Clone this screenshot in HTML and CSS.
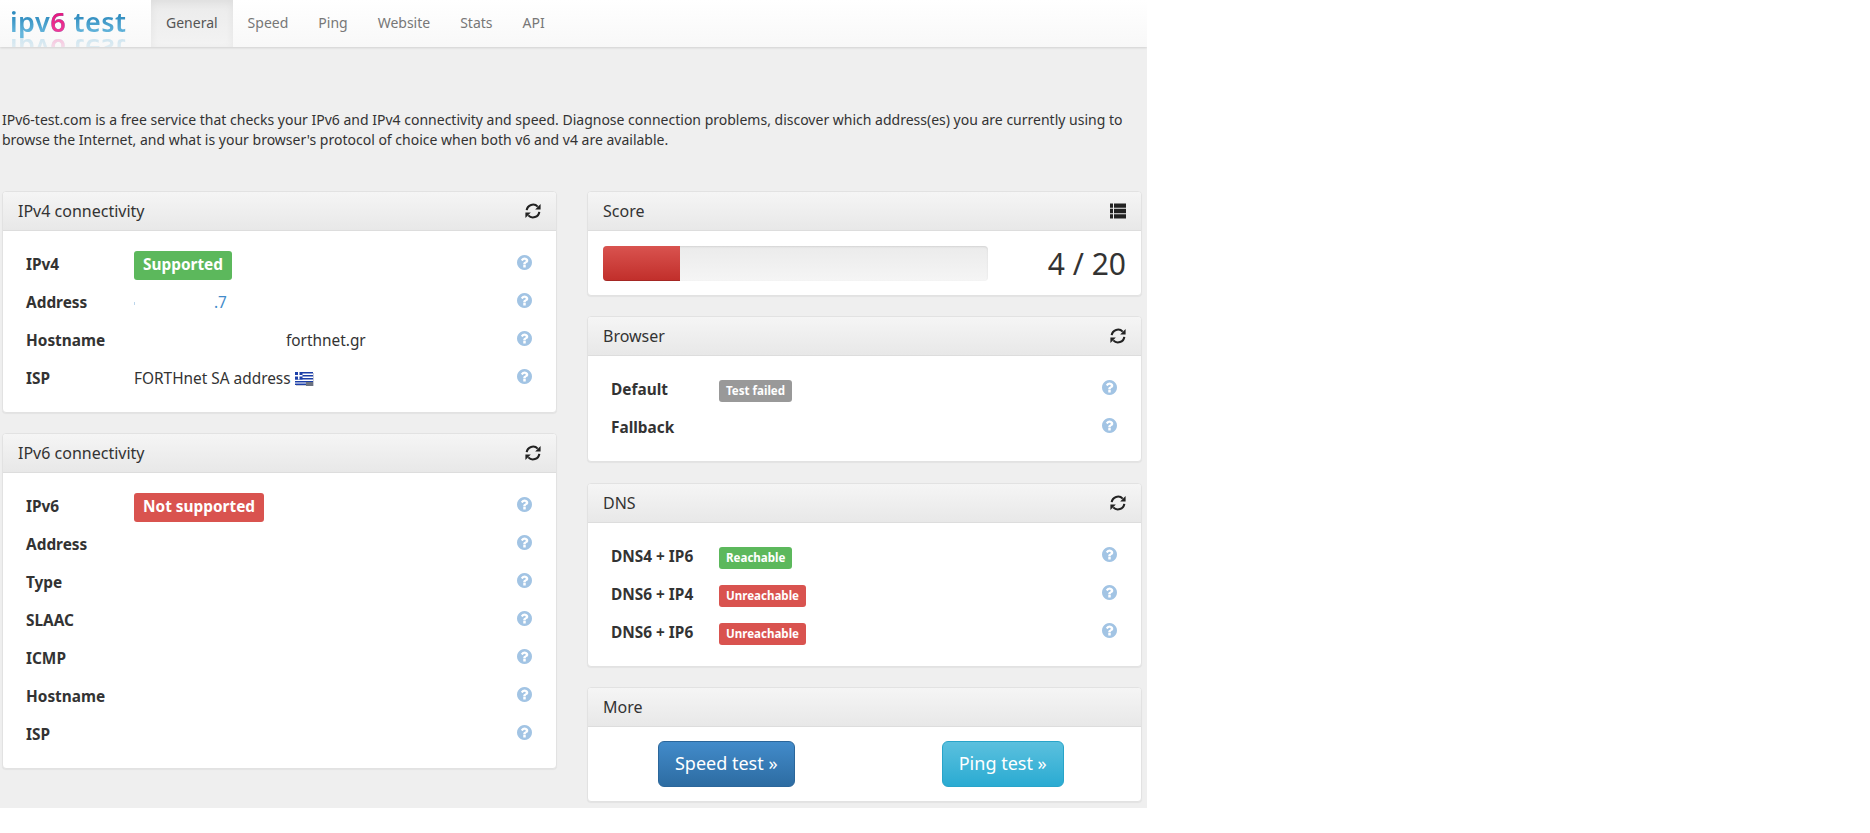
FILE: index.html
```html
<!DOCTYPE html>
<html lang="en">
<head>
<meta charset="utf-8">
<title>IPv6 test</title>
<link rel="stylesheet" href="styles.css">
</head>
<body>
<svg class="defs" width="0" height="0" aria-hidden="true">
  <symbol id="refresh" viewBox="0 0 16 16"><path class="arc" d="M1.7 7.2A6.4 6.4 0 0 1 12.7 3.6M14.3 8.8A6.4 6.4 0 0 1 3.3 12.4"/><path d="M15.6 1v5.4h-5.4zM.4 15V9.6h5.4z"/></symbol>
  <symbol id="help" viewBox="128 128 1536 1536"><path d="M1024 1376v-192q0-14-9-23t-23-9h-192q-14 0-23 9t-9 23v192q0 14 9 23t23 9h192q14 0 23-9t9-23zm256-672q0-88-55.5-163t-138.5-116-170-41q-243 0-371 213-15 24 8 42l132 100q7 6 19 6 16 0 25-12 53-68 86-92 34-24 86-24 48 0 85.5 26t37.5 59q0 38-20 61t-68 45q-63 28-115.5 86.5t-52.5 125.5v36q0 14 9 23t23 9h192q14 0 23-9t9-23q0-19 21.5-49.5t54.5-49.5q32-18 49-28.5t46-35 44.5-48 28-60.5 12.5-81zm384 192q0 209-103 385.5t-279.5 279.5-385.5 103-385.5-103-279.5-279.5-103-385.5 103-385.5 279.5-279.5 385.5-103 385.5 103 279.5 279.5 103 385.5z"/></symbol>
</svg>
<div class="page">
  <nav class="navbar">
    <a class="brand"><span class="logo">ipv<b>6</b> test</span></a>
    <ul class="nav">
      <li class="active">General</li>
      <li>Speed</li>
      <li>Ping</li>
      <li>Website</li>
      <li>Stats</li>
      <li>API</li>
    </ul>
  </nav>
  <p class="intro">IPv6-test.com is a free service that checks your IPv6 and IPv4 connectivity and speed. Diagnose connection problems, discover which address(es) you are currently using to browse the Internet, and what is your browser's protocol of choice when both v6 and v4 are available.</p>
  <main class="columns">
    <div class="col">
      <section class="panel">
        <header class="head"><span>IPv4 connectivity</span><svg class="ico"><use href="#refresh"/></svg></header>
        <div class="body">
          <div class="row"><strong>IPv4</strong><div class="val"><span class="label big green">Supported</span></div><svg class="q"><use href="#help"/></svg></div>
          <div class="row"><strong>Address</strong><div class="val"><span class="sliver"></span><a class="link masked-ip">.7</a></div><svg class="q"><use href="#help"/></svg></div>
          <div class="row"><strong>Hostname</strong><div class="val"><span class="masked-host">forthnet.gr</span></div><svg class="q"><use href="#help"/></svg></div>
          <div class="row"><strong>ISP</strong><div class="val isp">FORTHnet SA address
            <svg class="flag" viewBox="0 0 19 14"><rect x="1" y="1" width="18" height="13" fill="#c9ccd6"/><rect width="18" height="13" fill="#fff"/><path d="M0 0h18v1.5H0zM0 3h18v1.5H0zM0 6h18v1.5H0zM0 9h18v1.5H0zM0 11.5h18V13H0z" fill="#1c3fa8"/><rect width="7.5" height="7.5" fill="#1c3fa8"/><path d="M3 0h1.5v7.5H3zM0 3h7.5v1.5H0z" fill="#fff"/><rect x="11" y="10" width="7" height="4" fill="#6b7280"/></svg></div><svg class="q"><use href="#help"/></svg></div>
        </div>
      </section>
      <section class="panel">
        <header class="head"><span>IPv6 connectivity</span><svg class="ico"><use href="#refresh"/></svg></header>
        <div class="body">
          <div class="row"><strong>IPv6</strong><div class="val"><span class="label big red">Not supported</span></div><svg class="q"><use href="#help"/></svg></div>
          <div class="row"><strong>Address</strong><div class="val"></div><svg class="q"><use href="#help"/></svg></div>
          <div class="row"><strong>Type</strong><div class="val"></div><svg class="q"><use href="#help"/></svg></div>
          <div class="row"><strong>SLAAC</strong><div class="val"></div><svg class="q"><use href="#help"/></svg></div>
          <div class="row"><strong>ICMP</strong><div class="val"></div><svg class="q"><use href="#help"/></svg></div>
          <div class="row"><strong>Hostname</strong><div class="val"></div><svg class="q"><use href="#help"/></svg></div>
          <div class="row"><strong>ISP</strong><div class="val"></div><svg class="q"><use href="#help"/></svg></div>
        </div>
      </section>
    </div>
    <div class="col">
      <section class="panel">
        <header class="head"><span>Score</span><svg class="ico" viewBox="0 0 16 15"><path d="M0 0h3v4.3H0zM4 0h12v4.3H4zM0 5.35h3v4.3H0zM4 5.35h12v4.3H4zM0 10.7h3V15H0zM4 10.7h12V15H4z"/></svg></header>
        <div class="score">
          <div class="progress"><div class="bar"></div></div>
          <div class="points">4 / 20</div>
        </div>
      </section>
      <section class="panel panel-browser">
        <header class="head"><span>Browser</span><svg class="ico"><use href="#refresh"/></svg></header>
        <div class="body">
          <div class="row"><strong>Default</strong><div class="val"><span class="label small grey">Test failed</span></div><svg class="q"><use href="#help"/></svg></div>
          <div class="row"><strong>Fallback</strong><div class="val"></div><svg class="q"><use href="#help"/></svg></div>
        </div>
      </section>
      <section class="panel">
        <header class="head"><span>DNS</span><svg class="ico"><use href="#refresh"/></svg></header>
        <div class="body">
          <div class="row"><strong>DNS4 + IP6</strong><div class="val"><span class="label small green">Reachable</span></div><svg class="q"><use href="#help"/></svg></div>
          <div class="row"><strong>DNS6 + IP4</strong><div class="val"><span class="label small red">Unreachable</span></div><svg class="q"><use href="#help"/></svg></div>
          <div class="row"><strong>DNS6 + IP6</strong><div class="val"><span class="label small red">Unreachable</span></div><svg class="q"><use href="#help"/></svg></div>
        </div>
      </section>
      <section class="panel">
        <header class="head"><span>More</span></header>
        <div class="more">
          <div class="cell"><a class="btn blue">Speed test »</a></div>
          <div class="cell"><a class="btn cyan">Ping test »</a></div>
        </div>
      </section>
    </div>
  </main>
</div>
</body>
</html>
```

FILE: styles.css
```css
* { box-sizing: border-box; }
html, body { margin: 0; padding: 0; background: #fff; }
body {
  font-family: "Noto Sans", "Open Sans", sans-serif;
  font-size: 14px;
  line-height: 20px;
  color: #333;
}
.defs { display: block; height: 0; }
.page {
  width: 1147px;
  height: 808px;
  background: #efefef;
  overflow: hidden;
}
.navbar {
  display: flex;
  height: 47px;
  background: linear-gradient(#fff, #f8f8f8);
  box-shadow: 0 1px 2px rgba(0, 0, 0, .12);
}
.brand {
  display: block;
  width: 151px;
  height: 47px;
  padding: 6px 0 0 10px;
  overflow: hidden;
}
.logo {
  display: inline-block;
  font-size: 27px;
  line-height: 32px;
  font-weight: 600;
  letter-spacing: .45px;
  color: transparent;
  background: linear-gradient(#2f8cbf 30%, #66b6dc 85%);
  -webkit-background-clip: text;
  background-clip: text;
  -webkit-box-reflect: below -5px linear-gradient(transparent 25%, rgba(255, 255, 255, .3) 90%);
}
.logo b {
  font-weight: 600;
  background: linear-gradient(#e8197f 30%, #f0409c 85%);
  -webkit-background-clip: text;
  background-clip: text;
}
.nav {
  display: flex;
  margin: 0;
  padding: 0;
  list-style: none;
}
.nav li {
  padding: 13px 15px 0;
  color: #777;
}
.nav li.active {
  color: #555;
  background: linear-gradient(#ebebeb, #f3f3f3);
  box-shadow: inset 0 3px 9px rgba(0, 0, 0, .06);
}
.intro {
  margin: 63px 0 0;
  padding-left: 2px;
  width: 1130px;
}
.columns {
  display: flex;
  gap: 30px;
  margin-top: 41px;
  padding-left: 2px;
}
.col { width: 555px; }
.panel {
  margin-bottom: 20px;
  background: #fff;
  border: 1px solid #e2e2e2;
  border-radius: 4px;
  box-shadow: 0 1px 1px rgba(0, 0, 0, .05);
}
.panel-browser { margin-bottom: 21px; }
.head {
  display: flex;
  align-items: center;
  justify-content: space-between;
  height: 39px;
  padding: 0 15px;
  font-size: 16px;
  color: #333;
  background: linear-gradient(#f5f5f5, #e8e8e8);
  border-bottom: 1px solid #ddd;
  border-radius: 3px 3px 0 0;
}
.ico { width: 16px; height: 16px; fill: #222; flex: none; }
.arc { fill: none; stroke: #222; stroke-width: 2.1; }
.body { padding: 15px 24px 14px 23px; }
.row {
  display: flex;
  align-items: center;
  height: 38px;
  font-size: 15.4px;
}
.row strong { width: 108px; flex: none; font-weight: 700; }
.val { flex: 1; display: flex; align-items: center; gap: 4px; }
.q { width: 15px; height: 15px; fill: #a2c4e4; flex: none; margin-top: -5px; }
.label {
  display: inline-block;
  color: #fff;
  font-weight: 700;
  border-radius: 3px;
}
.big { height: 29px; padding: 0 9px; font-size: 15.4px; line-height: 27px; }
.small { height: 22px; padding: 0 7px; font-size: 11.55px; line-height: 21px; margin-top: 2px; }
.green { background: #5cb85c; }
.red { background: #d9534f; }
.grey { background: #999; }
.link { color: #428bca; }
.sliver { width: 1px; height: 3px; background: #bcd6ec; }
.masked-ip { margin-left: 75px; }
.masked-host { margin-left: 152px; }
.flag { width: 19px; height: 14px; flex: none; }
.score {
  display: flex;
  align-items: center;
  justify-content: space-between;
  height: 64px;
  padding: 0 15px;
}
.progress {
  width: 385px;
  height: 35px;
  background: linear-gradient(#ebebeb, #f5f5f5);
  border-radius: 4px;
  overflow: hidden;
  box-shadow: inset 0 1px 2px rgba(0, 0, 0, .1);
}
.bar {
  width: 20%;
  height: 100%;
  background: linear-gradient(#d9534f, #c12e2a);
  box-shadow: inset 0 -1px 0 rgba(0, 0, 0, .15);
}
.points { font-size: 30px; line-height: 35px; color: #333; }
.more { display: grid; grid-template-columns: 1fr 1fr; height: 74px; align-items: center; }
.cell { display: flex; justify-content: center; }
.btn {
  display: block;
  height: 46px;
  padding: 0 16px;
  font-size: 18px;
  line-height: 43px;
  color: #fff;
  border-radius: 6px;
}
.blue { background: linear-gradient(#428bca, #2d6ca2); border: 1px solid #2b669a; }
.cyan { background: linear-gradient(#5bc0de, #2aabd2); border: 1px solid #28a4c9; }
```
